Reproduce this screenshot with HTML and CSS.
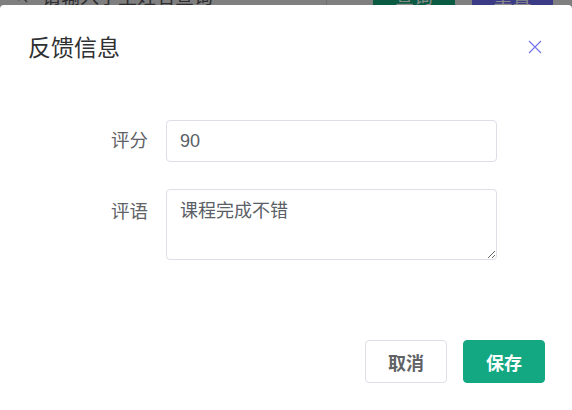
FILE: index.html
```html
<!DOCTYPE html>
<html lang="zh-CN">
<head>
<meta charset="utf-8">
<title>反馈信息</title>
<link rel="stylesheet" href="styles.css">
</head>
<body>
<div class="page">
  <div class="strip">
    <div class="strip-inner">
      <div class="search">
        <svg class="search-icon" width="16" height="16" viewBox="0 0 16 16"><circle cx="7" cy="7" r="5.5" fill="none" stroke="#3a3a3a" stroke-width="1.4"/><path d="M11 11l4 4" stroke="#3a3a3a" stroke-width="1.4"/></svg>
        <span class="search-ph">请输入学生姓名查询</span>
      </div>
      <button class="bg-btn bg-green">查询</button>
      <button class="bg-btn bg-purple">重置</button>
    </div>
  </div>
  <div class="dialog">
    <header class="dlg-head">
      <h2 class="dlg-title">反馈信息</h2>
      <button class="dlg-close" aria-label="关闭">
        <svg width="14" height="14" viewBox="0 0 14 14"><path d="M1 1L13 13M13 1L1 13" stroke="#7575ee" stroke-width="1.2" fill="none"/></svg>
      </button>
    </header>
    <form class="dlg-body">
      <div class="row">
        <label class="lbl">评分</label>
        <input class="field" type="text" value="90">
      </div>
      <div class="row">
        <label class="lbl lbl-top">评语</label>
        <textarea class="field area">课程完成不错</textarea>
      </div>
    </form>
    <footer class="dlg-foot">
      <button class="btn btn-cancel" type="button">取消</button>
      <button class="btn btn-save" type="button">保存</button>
    </footer>
  </div>
</div>
</body>
</html>
```

FILE: styles.css
```css
* { box-sizing: border-box; }
html, body {
  margin: 0;
  padding: 0;
  width: 572px;
  height: 410px;
  overflow: hidden;
  background: #7f7f7f;
  font-family: "Liberation Sans", "Noto Sans CJK SC", sans-serif;
}
.page {
  display: flex;
  flex-direction: column;
  height: 410px;
}
.strip {
  height: 5px;
  overflow: hidden;
  flex: none;
}
.strip-inner {
  display: flex;
  align-items: center;
  height: 40px;
  margin-top: -25px;
}
.search {
  width: 327px;
  height: 40px;
  display: flex;
  align-items: center;
  border-right: 1px solid #6e6f73;
  padding-left: 12px;
  gap: 14px;
}
.search-ph {
  font-size: 19px;
  color: #2e2e30;
}
.bg-btn {
  height: 40px;
  border: 0;
  border-radius: 4px;
  font-size: 19px;
  color: #8a8a8a;
  font-family: inherit;
  padding: 0;
}
.bg-green { width: 82px; margin-left: 46px; background: #0b5a42; }
.bg-purple { width: 81px; margin-left: 17px; background: #3b3b85; }

.dialog {
  flex: 1;
  background: #fff;
  border-radius: 4px 4px 0 0;
}
.dlg-head {
  display: flex;
  align-items: center;
  justify-content: space-between;
  padding: 28px 30px 0 28px;
}
.dlg-title {
  margin: 0;
  font-size: 23px;
  line-height: 30px;
  font-weight: 400;
  color: #303133;
}
.dlg-close {
  border: 0;
  background: none;
  padding: 0;
  width: 14px;
  height: 14px;
  display: flex;
  margin-top: -2px;
}
.dlg-body {
  margin: 0;
  padding-top: 57px;
  display: flex;
  flex-direction: column;
  gap: 27px;
}
.row {
  display: grid;
  grid-template-columns: 148px 331px;
  column-gap: 18px;
  align-items: start;
}
.lbl {
  text-align: right;
  font-size: 18.5px;
  line-height: 42px;
  color: #606266;
}
.lbl-top { line-height: 46px; }
.field {
  width: 331px;
  height: 42px;
  border: 1px solid #dcdfe6;
  border-radius: 4px;
  padding: 0 13px;
  font-family: inherit;
  font-size: 18px;
  color: #5a5e66;
  background: #fff;
  outline: none;
}
.area {
  height: 71px;
  padding: 8px 13px;
  line-height: 26px;
  resize: vertical;
  display: block;
}
.dlg-foot {
  display: flex;
  justify-content: flex-end;
  gap: 16px;
  padding: 80px 27px 0 0;
}
.btn {
  width: 82px;
  height: 43px;
  border-radius: 4px;
  font-family: inherit;
  font-size: 18px;
  font-weight: 600;
  padding: 0;
}
.btn-cancel {
  background: #fff;
  border: 1px solid #dcdfe6;
  color: #606266;
}
.btn-save {
  background: #13a882;
  border: 1px solid #13a882;
  color: #fff;
}
```
